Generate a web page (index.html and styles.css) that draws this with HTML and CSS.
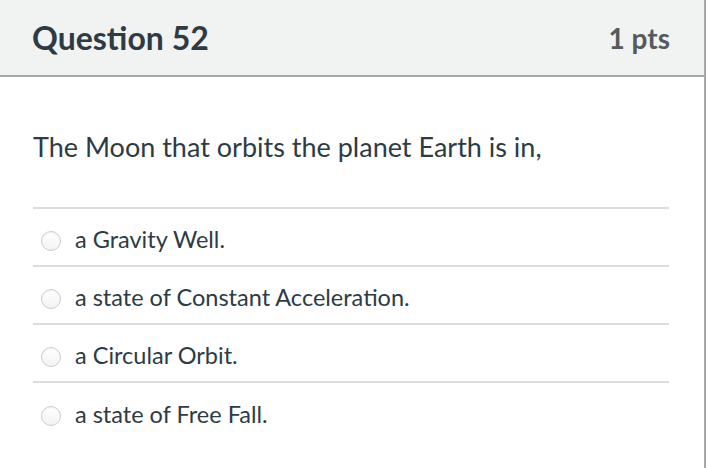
FILE: index.html
```html
<!DOCTYPE html>
<html lang="en">
<head>
<meta charset="utf-8">
<title>Question 52</title>
<link rel="stylesheet" href="styles.css">
</head>
<body>
<div class="card">
  <div class="header">
    <h2 class="title">Question 52</h2>
    <div class="pts">1 pts</div>
  </div>
  <div class="content">
    <p class="question">The Moon that orbits the planet Earth is in,</p>
    <div class="answers">
      <label class="answer"><span class="radio"></span><span class="text">a Gravity Well.</span></label>
      <label class="answer"><span class="radio"></span><span class="text">a state of Constant Acceleration.</span></label>
      <label class="answer"><span class="radio"></span><span class="text">a Circular Orbit.</span></label>
      <label class="answer"><span class="radio"></span><span class="text">a state of Free Fall.</span></label>
    </div>
  </div>
</div>
</body>
</html>
```
FILE: styles.css
```css
html, body {
  margin: 0;
  padding: 0;
  background: #ffffff;
}
body {
  font-family: Lato, "Open Sans", sans-serif;
  color: #2d3b45;
}
.card {
  width: 704px;
  height: 468px;
  border-right: 2px solid #a8a8a8;
  box-sizing: content-box;
}
.header {
  height: 75px;
  background: #f1f2f2;
  border-bottom: 2px solid #a8a8a8;
  display: flex;
  align-items: center;
  justify-content: space-between;
  padding: 0 34px 0 32px;
}
.title {
  margin: 0;
  font-size: 32px;
  line-height: 40px;
  font-weight: 700;
  color: #2d3b45;
}
.pts {
  font-size: 28px;
  line-height: 40px;
  font-weight: 700;
  color: #565a5d;
}
.content {
  padding: 0 35px 0 33px;
}
.question {
  margin: 0;
  padding: 53px 0 43px;
  font-size: 27px;
  line-height: 34px;
}
.answers {
  border-top: 2px solid #dcdcdc;
}
.answer {
  display: flex;
  align-items: center;
  height: 58px;
  box-sizing: border-box;
  padding-top: 4px;
  border-bottom: 2px solid #dcdcdc;
  font-size: 23.5px;
  line-height: 30px;
}
.answer:last-child {
  border-bottom: none;
}
.radio {
  width: 18px;
  height: 18px;
  border-radius: 50%;
  border: 1px solid #cccccc;
  background: linear-gradient(#ffffff, #f3f3f3);
  box-shadow: inset 0 1px 1px rgba(0,0,0,0.05);
  margin: 3px 14px 0 8px;
  flex: none;
}
```
